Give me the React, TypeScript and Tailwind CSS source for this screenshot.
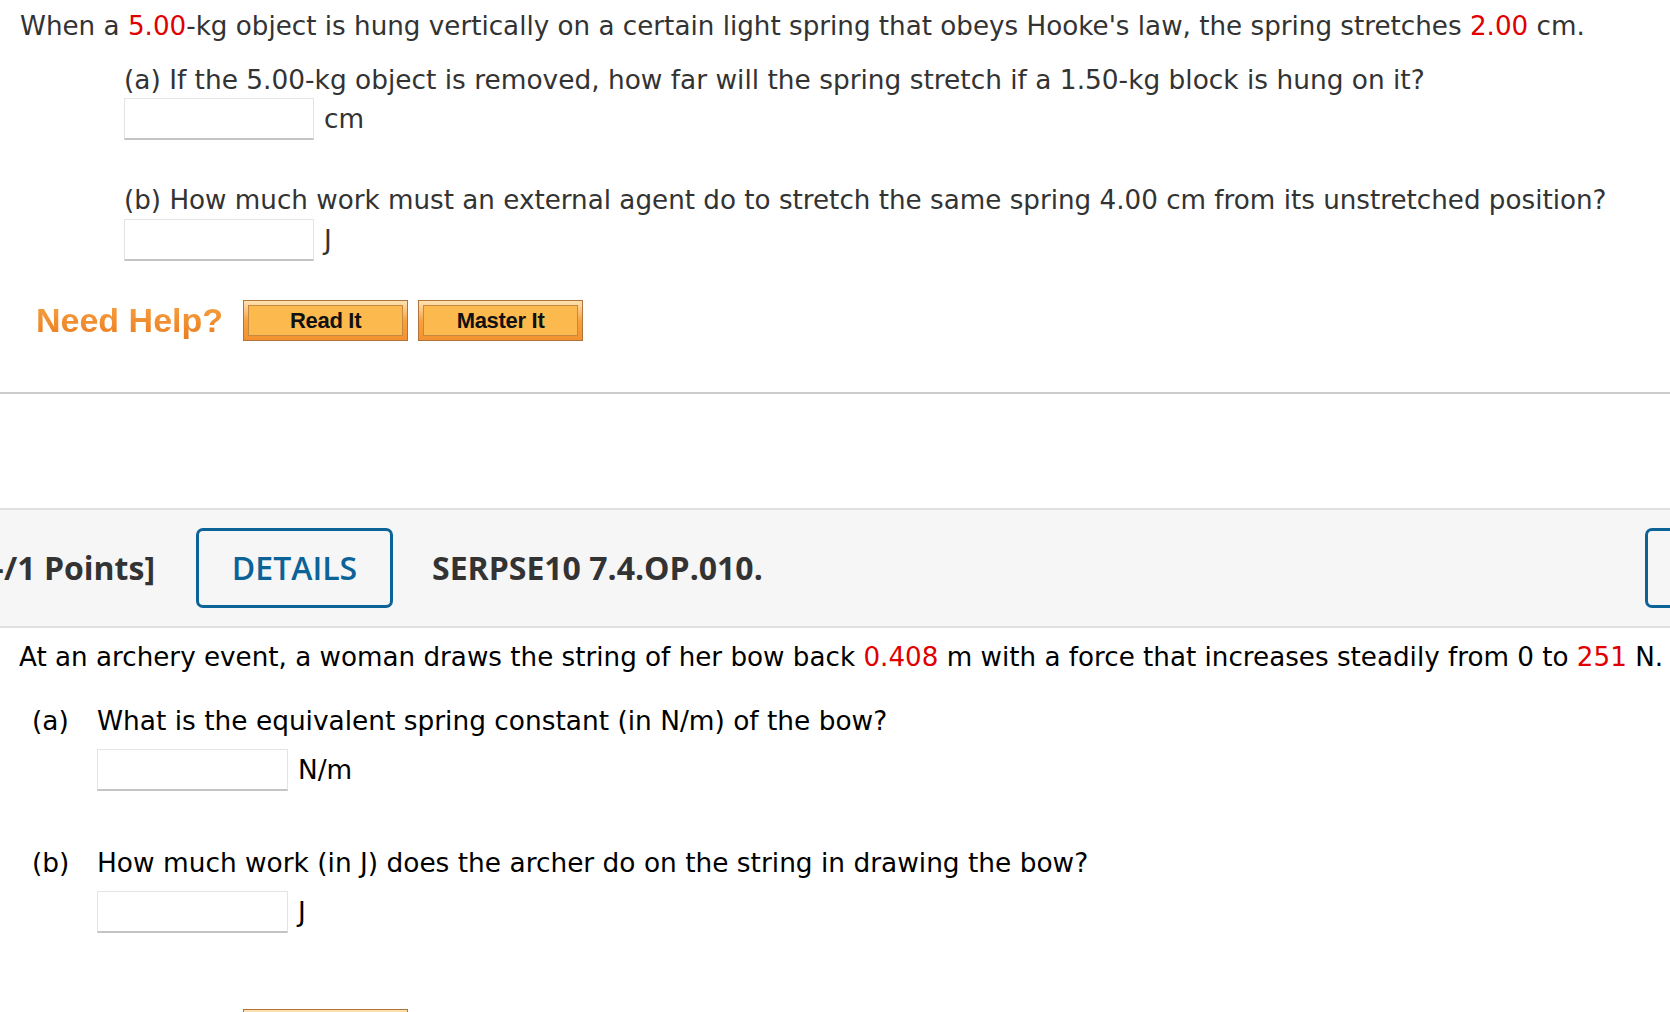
import React from 'react'

const body = "font-['DejaVu_Sans',Verdana,sans-serif]"
const head = "font-['Open_Sans',sans-serif]"

function Answer({ unit, width = 'w-[191px]' }: { unit: string; width?: string }) {
  return (
    <div className="flex items-center gap-[10px]">
      <div className={`${width} h-[42px] bg-white border border-[#e4e4e4] border-b-2 border-b-[#c4c4c4]`} />
      <span className="text-[26.3px] leading-[31px]">{unit}</span>
    </div>
  )
}

function HelpButton({ label, className = '' }: { label: string; className?: string }) {
  return (
    <div
      className={`w-[165px] h-[41px] p-[4px] border border-[#b0733a] bg-gradient-to-b from-[#fde3b2] via-[#f8a23e] to-[#f39130] ${className}`}
    >
      <div className="h-full flex items-center justify-center border border-[#c48a44] bg-[#fcb94d] font-['Liberation_Sans',Arial,sans-serif] font-bold text-[22px] text-[#111] tracking-[-0.3px]">
        {label}
      </div>
    </div>
  )
}

export default function App() {
  return (
    <div className={`w-full min-h-screen bg-white overflow-hidden ${body}`}>
      {/* first question */}
      <div className="pt-[11px] pl-[20px] text-[#333]">
        <p className="text-[26.2px] leading-[31px] whitespace-nowrap">
          When a <span className="text-[#e00000]">5.00</span>-kg object is hung vertically on a certain light spring that
          obeys Hooke's law, the spring stretches <span className="text-[#e00000]">2.00</span> cm.
        </p>
        <div className="ml-[104px]">
          <p className="mt-[22px] text-[26.4px] leading-[31px] whitespace-nowrap">
            (a) If the 5.00-kg object is removed, how far will the spring stretch if a 1.50-kg block is hung on it?
          </p>
          <div className="mt-[3px]">
            <Answer unit="cm" width="w-[190px]" />
          </div>
          <p className="mt-[45px] text-[26.2px] leading-[31px] whitespace-nowrap">
            (b) How much work must an external agent do to stretch the same spring 4.00 cm from its unstretched position?
          </p>
          <div className="mt-[3px]">
            <Answer unit="J" width="w-[190px]" />
          </div>
        </div>
        <div className="mt-[39px] ml-[16px] flex items-center">
          <span className="font-['Liberation_Sans',Arial,sans-serif] font-bold text-[34px] leading-[41px] bg-gradient-to-b from-[#f7a443] to-[#ea7a1a] bg-clip-text text-transparent">
            Need Help?
          </span>
          <HelpButton label="Read It" className="ml-[20px]" />
          <HelpButton label="Master It" className="ml-[10px]" />
        </div>
      </div>

      <div className="mt-[51px] h-[2px] bg-[#cccccc]" />

      {/* question header */}
      <div className={`mt-[114px] h-[120px] flex items-center border-y-2 border-[#e0e0e0] bg-[#f6f6f6] overflow-hidden ${head}`}>
        <div className="w-[155px] shrink-0 flex justify-end overflow-hidden">
          <span className="whitespace-nowrap font-bold text-[32px] text-[#333]">[–/1 Points]</span>
        </div>
        <div className="ml-[41px] shrink-0 w-[197px] h-[80px] rounded-[7px] border-[3px] border-[#0b6397] flex items-center justify-center">
          <span className="font-semibold text-[32px] text-[#0b6397]">DETAILS</span>
        </div>
        <span className="ml-[39px] whitespace-nowrap font-bold text-[32px] text-[#333]">SERPSE10 7.4.OP.010.</span>
        <div className="ml-auto mr-[-172px] shrink-0 w-[197px] h-[80px] rounded-[7px] border-[3px] border-[#0b6397]" />
      </div>

      {/* second question */}
      <div className="pl-[19px] text-black">
        <p className="mt-[14px] text-[26.2px] leading-[31px] whitespace-nowrap">
          At an archery event, a woman draws the string of her bow back <span className="text-[#e00000]">0.408</span> m with
          a force that increases steadily from 0 to <span className="text-[#e00000]">251</span> N.
        </p>
        <div className="mt-[32px] flex text-[26.4px] leading-[31px]">
          <span className="w-[78px] pl-[13px]">(a)</span>
          <div>
            <p>What is the equivalent spring constant (in N/m) of the bow?</p>
            <div className="mt-[13px]">
              <Answer unit="N/m" />
            </div>
          </div>
        </div>
        <div className="mt-[56px] flex text-[26.4px] leading-[31px]">
          <span className="w-[78px] pl-[13px]">(b)</span>
          <div>
            <p>How much work (in J) does the archer do on the string in drawing the bow?</p>
            <div className="mt-[13px]">
              <Answer unit="J" />
            </div>
          </div>
        </div>
        <div className="mt-[76px] ml-[224px]">
          <HelpButton label="Read It" />
        </div>
      </div>
    </div>
  )
}
